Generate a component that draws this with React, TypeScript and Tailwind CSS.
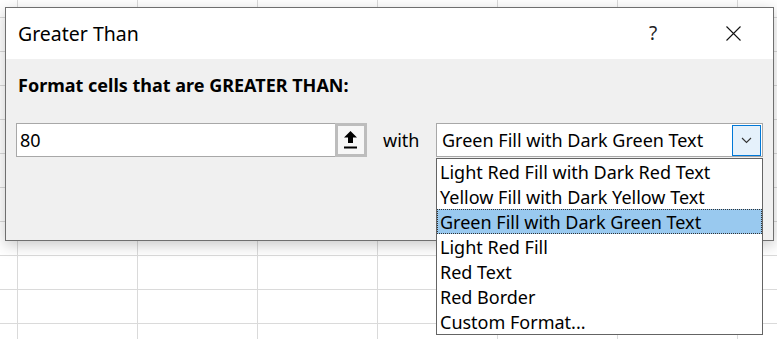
import React from "react";

const items = [
  "Light Red Fill with Dark Red Text",
  "Yellow Fill with Dark Yellow Text",
  "Green Fill with Dark Green Text",
  "Light Red Fill",
  "Red Text",
  "Red Border",
  "Custom Format...",
];

export default function App() {
  return (
    <div
      className="relative w-[777px] h-[339px] overflow-hidden bg-white bg-[linear-gradient(to_right,#dadada_1px,transparent_1px),linear-gradient(to_bottom,#dadada_1px,transparent_1px)] bg-[size:120px_34px] bg-[position:17px_17px] text-black"
      style={{ fontFamily: '"Noto Sans", "Open Sans", sans-serif' }}
    >
      <div className="absolute left-[5px] top-[7px] w-[769px] h-[234px] border border-[#6f6f6f] bg-[#f0f0f0] flex flex-col shadow-[0_4px_14px_rgba(0,0,0,0.22)]">
        {/* Title bar */}
        <div className="h-[51px] bg-white flex items-center pl-[12px] shrink-0">
          <span className="text-[19.5px] leading-none">Greater Than</span>
          <div className="flex-1" />
          <span className="w-[20px] text-center text-[19px] leading-none text-[#222]">?</span>
          <svg width="15" height="15" viewBox="0 0 15 15" className="ml-[63px] mr-[32px]">
            <path d="M0.5 0.5 L14.5 14.5 M14.5 0.5 L0.5 14.5" stroke="#111" strokeWidth="1.1" fill="none" />
          </svg>
        </div>
        {/* Body */}
        <div className="flex flex-col pl-[10px] pt-[14px]">
          <div className="ml-[2px] text-[18px] font-bold leading-[24px]">
            Format cells that are GREATER THAN:
          </div>
          <div className="mt-[26px] flex items-center">
            <div className="flex w-[351px] h-[34px]">
              <div className="flex-1 bg-white border border-r-0 border-[#a8a8a8] flex items-center pl-[3px] text-[18px]">
                80
              </div>
              <div className="w-[32px] h-[34px] border-[3px] border-[#bdbdbd] bg-[#f7f7f7] flex items-center justify-center">
                <svg width="13" height="18" viewBox="0 0 13 18" className="mr-[2px]">
                  <path d="M6.5 0 L13 6.5 L9 6.5 L9 12 L4 12 L4 6.5 L0 6.5 Z" fill="#000" />
                  <rect x="0" y="15.5" width="13" height="2" fill="#000" />
                </svg>
              </div>
            </div>
            <span className="ml-[16px] w-[37px] text-[18px] leading-none">with</span>
            <div className="relative ml-[16px] w-[327px] h-[34px] bg-white border border-[#a8a8a8] flex items-center">
              <span className="pl-[5px] text-[18px] leading-none flex-1">Green Fill with Dark Green Text</span>
              <div className="w-[29px] h-[31px] mr-[1px] border border-[#0078d7] bg-[#e5f1fb] flex items-center justify-center">
                <svg width="11" height="7" viewBox="0 0 11 7">
                  <path d="M1 1 L5.5 5.5 L10 1" stroke="#333" strokeWidth="1.1" fill="none" />
                </svg>
              </div>
              <div className="absolute left-[-1px] top-[34px] w-[327px] bg-white border border-[#646464] flex flex-col z-10">
                {items.map((t, i) => (
                  <div
                    key={t}
                    className={
                      i === 2
                        ? "h-[25px] flex items-center pl-[2px] text-[18px] leading-none bg-[#99c9ef] border border-dotted border-[#333]"
                        : "h-[25px] flex items-center pl-[3px] text-[18px] leading-none"
                    }
                  >
                    {t}
                  </div>
                ))}
              </div>
            </div>
          </div>
        </div>
      </div>
    </div>
  );
}
